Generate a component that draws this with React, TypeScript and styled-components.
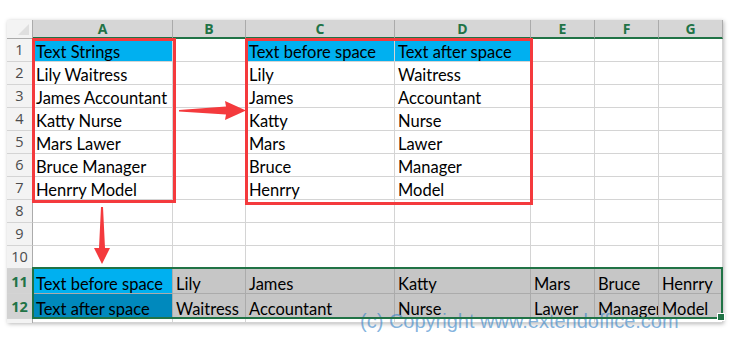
import React from 'react'
import styled, { createGlobalStyle } from 'styled-components'

const GlobalStyle = createGlobalStyle`
  body {
    margin: 0;
    background: #ffffff;
    font-family: Lato, "Open Sans", sans-serif;
  }
`

const columns = ['A', 'B', 'C', 'D', 'E', 'F', 'G']
const colWidths = [140, 73, 149, 136, 64, 64, 64]

const topRows: string[][] = [
  ['Text Strings', '', 'Text before space', 'Text after space', '', '', ''],
  ['Lily Waitress', '', 'Lily', 'Waitress', '', '', ''],
  ['James Accountant', '', 'James', 'Accountant', '', '', ''],
  ['Katty Nurse', '', 'Katty', 'Nurse', '', '', ''],
  ['Mars Lawer', '', 'Mars', 'Lawer', '', '', ''],
  ['Bruce Manager', '', 'Bruce', 'Manager', '', '', ''],
  ['Henrry Model', '', 'Henrry', 'Model', '', '', ''],
  ['', '', '', '', '', '', ''],
  ['', '', '', '', '', '', ''],
  ['', '', '', '', '', '', ''],
]

const pickedRows: string[][] = [
  ['Text before space', 'Lily', 'James', 'Katty', 'Mars', 'Bruce', 'Henrry'],
  ['Text after space', 'Waitress', 'Accountant', 'Nurse', 'Lawer', 'Manager', 'Model'],
]

type Fill = 'none' | 'blue' | 'blueDark' | 'grey'

const fills: Record<Fill, string> = {
  none: '#ffffff',
  blue: '#00b0f0',
  blueDark: '#0089bd',
  grey: '#c6c6c6',
}

export default function App(): JSX.Element {
  function fillFor(row: number, col: number): Fill {
    if (row === 0 && (col === 0 || col === 2 || col === 3)) return 'blue'
    return 'none'
  }

  return (
    <Page>
      <GlobalStyle />
      <Frame>
        <Sheet>
          <Corner>
            <CornerMark />
          </Corner>
          {columns.map((c) => (
            <ColHead key={c}>{c}</ColHead>
          ))}

          {topRows.map((row, r) => (
            <React.Fragment key={r}>
              <RowHead>{r + 1}</RowHead>
              {row.map((text, c) => (
                <Cell key={c} $fill={fillFor(r, c)}>
                  {text}
                </Cell>
              ))}
            </React.Fragment>
          ))}

          {pickedRows.map((row, r) => (
            <React.Fragment key={'p' + r}>
              <RowHead $active>{r + 11}</RowHead>
              {row.map((text, c) => (
                <Cell
                  key={c}
                  $picked
                  $fill={c === 0 ? (r === 0 ? 'blue' : 'blueDark') : 'grey'}
                >
                  {text}
                </Cell>
              ))}
            </React.Fragment>
          ))}

          <RowHead $stub />
          {columns.map((c) => (
            <Cell key={'s' + c} $fill="none" />
          ))}
        </Sheet>

        <RedBox $left={25} $top={18} $width={144} $height={165} />
        <RedBox $left={238} $top={18} $width={288} $height={167} />

        <RightArrow width="70" height="22" viewBox="0 0 70 22">
          <path d="M1 10 L48 6.5 L47 1 L68 10.5 L47 20 L48 14.5 L1 11.5 Z" fill="#f43a3d" />
        </RightArrow>
        <DownArrow width="20" height="60" viewBox="0 0 20 60">
          <path d="M9 1 L11 1 L13 42 L18 42 L10 58 L2 42 L7 42 Z" fill="#f43a3d" />
        </DownArrow>

        <Selection>
          <Handle />
        </Selection>
      </Frame>

      <Watermark>(c) Copyright www.extendoffice.com</Watermark>
    </Page>
  )
}

const Page = styled.div`
  position: relative;
  min-height: 337px;
  box-sizing: border-box;
  padding: 20px 0 0 7px;
`

const Frame = styled.div`
  position: relative;
  width: 716px;
  box-shadow: 1px 1px 4px rgba(0, 0, 0, 0.28);
`

const Sheet = styled.div`
  display: grid;
  grid-template-columns: 26px ${colWidths.map((w) => w + 'px').join(' ')};
  grid-template-rows: 19px repeat(10, 23px) 25px 25px 4px;
  background: #ffffff;
  overflow: hidden;
`

const Corner = styled.div`
  position: relative;
  background: #f3f3f3;
  border-right: 1px solid #ababab;
  border-bottom: 1px solid #ababab;
`

const CornerMark = styled.div`
  position: absolute;
  right: 3px;
  bottom: 3px;
  width: 0;
  height: 0;
  border-left: 11px solid transparent;
  border-bottom: 11px solid #dfdfdf;
`

const ColHead = styled.div`
  display: flex;
  align-items: center;
  justify-content: center;
  background: #d6d6d6;
  border-right: 1px solid #ababab;
  border-bottom: 2px solid #217346;
  color: #217346;
  font-family: "Open Sans", Lato, sans-serif;
  font-weight: 700;
  font-size: 14px;
`

const RowHead = styled.div<{ $active?: boolean; $stub?: boolean }>`
  display: flex;
  align-items: flex-end;
  justify-content: center;
  padding-bottom: 2px;
  box-sizing: border-box;
  background: ${(p) => (p.$active ? '#d2d2d2' : '#f3f3f3')};
  border-right: 1px solid ${(p) => (p.$active ? '#217346' : '#ababab')};
  border-bottom: ${(p) => (p.$stub ? '0' : '1px solid #d4d4d4')};
  color: ${(p) => (p.$active ? '#217346' : '#4b4b4b')};
  font-family: "Open Sans", Lato, sans-serif;
  font-weight: ${(p) => (p.$active ? 700 : 400)};
  font-size: 14.5px;
  line-height: 18px;
`

const Cell = styled.div<{ $fill: Fill; $picked?: boolean }>`
  display: flex;
  align-items: flex-end;
  box-sizing: border-box;
  padding: 0 0 0 3px;
  background: ${(p) => fills[p.$fill]};
  border-right: 1px solid ${(p) => (p.$picked ? '#ababab' : '#d4d4d4')};
  border-bottom: 1px solid ${(p) => (p.$picked ? '#ababab' : '#d4d4d4')};
  color: #000000;
  font-size: 16.5px;
  line-height: 17px;
  white-space: nowrap;
  overflow-x: clip;
  overflow-y: visible;
`

const RedBox = styled.div<{ $left: number; $top: number; $width: number; $height: number }>`
  position: absolute;
  left: ${(p) => p.$left}px;
  top: ${(p) => p.$top}px;
  width: ${(p) => p.$width}px;
  height: ${(p) => p.$height}px;
  box-sizing: border-box;
  border: 3px solid #f43a3d;
  pointer-events: none;
`

const RightArrow = styled.svg`
  position: absolute;
  left: 171px;
  top: 80px;
`

const DownArrow = styled.svg`
  position: absolute;
  left: 85px;
  top: 186px;
`

const Selection = styled.div`
  position: absolute;
  z-index: 6;
  left: 25px;
  top: 247px;
  width: 691px;
  height: 52px;
  box-sizing: border-box;
  border: 2px solid #217346;
`

const Handle = styled.div`
  position: absolute;
  right: -4px;
  bottom: -4px;
  width: 6px;
  height: 6px;
  background: #217346;
  border: 1px solid #ffffff;
`

const Watermark = styled.div`
  position: absolute;
  z-index: 5;
  left: 360px;
  top: 310px;
  font-family: "Liberation Sans", Arial, sans-serif;
  font-size: 20px;
  line-height: 22px;
  color: rgba(50, 130, 200, 0.6);
  white-space: nowrap;
  pointer-events: none;
`
